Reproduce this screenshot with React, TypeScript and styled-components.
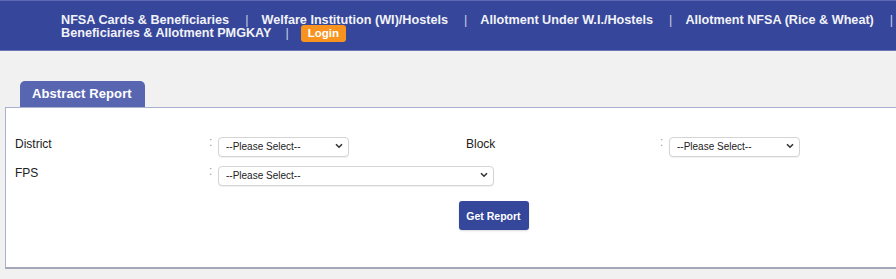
import React from "react";
import styled, { createGlobalStyle } from "styled-components";

const Global = createGlobalStyle`
  html, body {
    margin: 0;
    padding: 0;
    background: #f1f1f1;
    overflow: hidden;
    font-family: "Liberation Sans", Arial, sans-serif;
  }
`;

const Page = styled.div`
  width: 987px;
`;

const Header = styled.header`
  background: #36469a;
  border-top: 1px solid #5d6ab3;
  border-bottom: 1px solid #6a76b6;
  padding: 13px 0 10px 61px;
  color: #f1f2f8;
  font-size: 12.65px;
  font-weight: 700;
`;

const NavLine = styled.div`
  line-height: 13px;
  height: 13px;
  white-space: nowrap;
`;

const NavItem = styled.span``;

const Sep = styled.span<{ $tight?: boolean }>`
  display: inline-block;
  margin: ${(p) => (p.$tight ? "0 12px 0 14px" : "0 13px 0 16px")};
  font-weight: 400;
  color: #c9cde6;
`;

const LoginButton = styled.span`
  background: #f7931e;
  color: #ffffff;
  border-radius: 3px;
  padding: 2px 7px 3px;
  font-size: 11.5px;
`;

const Content = styled.main`
  padding: 30px 5px 0 5px;
`;

const Tab = styled.div`
  display: inline-block;
  margin-left: 15px;
  background: #5866b2;
  color: #ffffff;
  font-size: 13px;
  font-weight: 700;
  border-radius: 5px 5px 0 0;
  height: 26px;
  line-height: 26px;
  padding: 0 13px 0 12px;
  vertical-align: bottom;
  letter-spacing: 0.1px;
`;

const Panel = styled.section`
  width: 977px;
  box-sizing: border-box;
  background: #ffffff;
  border: 1px solid #aab0d0;
  border-bottom: 2px solid #a4a7b6;
  padding: 27px 9px 37px 9px;
`;

const Row = styled.div`
  display: flex;
  height: 29px;
`;

const Field = styled.div<{ $width?: number }>`
  display: flex;
  align-items: flex-start;
  width: ${(p) => (p.$width ? `${p.$width}px` : "auto")};
`;

const Label = styled.label`
  width: 194px;
  padding-top: 2px;
  font-size: 12px;
  color: #222222;
`;

const Colon = styled.span`
  width: 9px;
  font-size: 12px;
  color: #9a9a9a;
`;

const SelectWrap = styled.div<{ $width: number }>`
  position: relative;
  width: ${(p) => p.$width}px;
  height: 20px;
  margin-top: 1px;
`;

const Select = styled.select`
  appearance: none;
  -webkit-appearance: none;
  width: 100%;
  height: 100%;
  box-sizing: border-box;
  border: 1px solid #d4d4d4;
  border-radius: 4px;
  background: #ffffff;
  box-shadow: 0 1px 1px rgba(0, 0, 0, 0.06);
  font-family: "Liberation Sans", Arial, sans-serif;
  font-size: 10px;
  color: #222222;
  padding: 0 0 0 7px;
  outline: none;
`;

const Chevron = styled.svg`
  position: absolute;
  right: 6px;
  top: 7px;
  pointer-events: none;
`;

const Actions = styled.div`
  display: flex;
  justify-content: center;
  padding-top: 8px;
`;

const ReportButton = styled.button`
  background: #35479b;
  color: #ffffff;
  border: none;
  border-radius: 3px;
  width: 70px;
  height: 29px;
  font-family: "Liberation Sans", Arial, sans-serif;
  font-size: 10.5px;
  font-weight: 700;
  padding: 0;
  box-shadow: 0 1px 2px rgba(0, 0, 0, 0.15);
`;

const Dropdown = ({ width }: { width: number }) => (
  <SelectWrap $width={width}>
    <Select defaultValue="">
      <option value="">--Please Select--</option>
    </Select>
    <Chevron width="8" height="6" viewBox="0 0 8 6">
      <path d="M1 1.2 L4 4.2 L7 1.2" fill="none" stroke="#333" strokeWidth="1.6" />
    </Chevron>
  </SelectWrap>
);

export default function App() {
  return (
    <Page>
      <Global />
      <Header>
        <NavLine>
          <NavItem>NFSA Cards &amp; Beneficiaries</NavItem>
          <Sep>|</Sep>
          <NavItem>Welfare Institution (WI)/Hostels</NavItem>
          <Sep>|</Sep>
          <NavItem>Allotment Under W.I./Hostels</NavItem>
          <Sep>|</Sep>
          <NavItem>Allotment NFSA (Rice &amp; Wheat)</NavItem>
          <Sep>|</Sep>
        </NavLine>
        <NavLine>
          <NavItem>Beneficiaries &amp; Allotment PMGKAY</NavItem>
          <Sep $tight>|</Sep>
          <LoginButton>Login</LoginButton>
        </NavLine>
      </Header>
      <Content>
        <Tab>Abstract Report</Tab>
        <Panel>
          <Row>
            <Field $width={451}>
              <Label>District</Label>
              <Colon>:</Colon>
              <Dropdown width={131} />
            </Field>
            <Field $width={451}>
              <Label>Block</Label>
              <Colon>:</Colon>
              <Dropdown width={131} />
            </Field>
          </Row>
          <Row>
            <Field>
              <Label>FPS</Label>
              <Colon>:</Colon>
              <Dropdown width={276} />
            </Field>
          </Row>
          <Actions>
            <ReportButton>Get Report</ReportButton>
          </Actions>
        </Panel>
      </Content>
    </Page>
  );
}
